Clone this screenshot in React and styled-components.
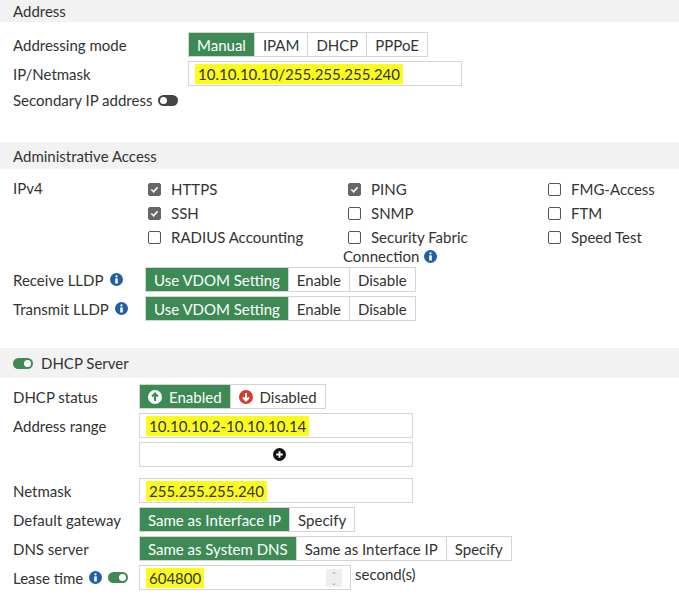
import React from "react";
import styled, { createGlobalStyle } from "styled-components";

const G = createGlobalStyle`
  body { margin:0; background:#fff; font-family: Lato, "Open Sans", sans-serif; font-size:15px; color:#333; }
`;
const GREEN = "#3d8a55";

const Header = styled.div`
  background:#f2f2f2; height:${p => p.h || 24}px; display:flex; align-items:center; gap:8px;
  padding-left:13px; margin-top:${p => p.mt || 0}px; color:#333; font-size:15px;
`;
const Row = styled.div`
  display:flex; align-items:${p => p.top ? "flex-start" : "center"}; padding-left:13px;
  margin-top:${p => p.mt || 4}px; min-height:24px;
`;
const Label = styled.div`
  width:${p => p.w}px; flex:none; display:flex; align-items:center; gap:6px; white-space:nowrap;
`;
const Group = styled.div` display:flex; border:1px solid #d5d5d5; height:23px; `;
const Seg = styled.div`
  padding:0 ${p => p.px || 8}px; display:flex; align-items:center; gap:7px;
  background:${p => p.on ? GREEN : "#fff"}; color:${p => p.on ? "#fff" : "#333"};
  & + & { border-left:1px solid #d5d5d5; }
`;
const Input = styled.div`
  width:${p => p.w}px; height:25px; border:1px solid #d5d5d5; box-sizing:border-box;
  display:flex; align-items:center; padding-left:6px; justify-content:${p => p.center ? "center" : "flex-start"};
  position:relative;
`;
const Hl = styled.span` background:#fbfb1e; padding:1px 3px; `;
const Toggle = styled.span`
  width:20px; height:11px; border-radius:6px; background:${p => p.on ? GREEN : "#444"};
  position:relative; display:inline-block; flex:none;
  &::after { content:""; position:absolute; top:2px; ${p => p.on ? "right:2px" : "left:2px"}; width:7px; height:7px; border-radius:50%; background:#fff; }
`;
const Info = () => (
  <svg width="13" height="13" viewBox="0 0 14 14"><circle cx="7" cy="7" r="7" fill="#1f5fa8"/><circle cx="7" cy="3.6" r="1.2" fill="#fff"/><rect x="5.6" y="5.8" width="2.8" height="5.5" fill="#fff"/></svg>
);
const Grid = styled.div` display:grid; grid-template-columns:200px 200px 130px; row-gap:4px; align-items:start; `;
const Check = styled.div` display:flex; align-items:center; gap:10px; height:20px; `;
const Box = styled.span`
  width:13px; height:13px; border-radius:2px; box-sizing:border-box;
  border:1px solid ${p => p.on ? "#666" : "#555"}; background:${p => p.on ? "#666" : "#fff"};
  display:inline-flex; align-items:center; justify-content:center; flex:none;
`;
const CB = ({ on, children }) => (
  <Check><Box on={on}>{on && <svg width="9" height="9" viewBox="0 0 10 10"><path d="M1.5 5l2.5 2.5 4.5-5" stroke="#fff" strokeWidth="1.8" fill="none"/></svg>}</Box>{children}</Check>
);
const Spin = styled.div`
  position:absolute; right:8px; top:3px; width:16px; height:18px; background:#eee;
  display:flex; flex-direction:column; align-items:center; justify-content:center; font-size:7px; color:#999; line-height:8px;
`;

export default function App() {
  return (
    <>
      <G />
      <Header h={22}>Address</Header>
      <Row mt={10}><Label w={175}>Addressing mode</Label>
        <Group><Seg on>Manual</Seg><Seg>IPAM</Seg><Seg>DHCP</Seg><Seg>PPPoE</Seg></Group></Row>
      <Row mt={4}><Label w={175}>IP/Netmask</Label><Input w={274}><Hl>10.10.10.10/255.255.255.240</Hl></Input></Row>
      <Row mt={2}><Label w={175}>Secondary IP address <Toggle /></Label></Row>
      <Header h={27} mt={30}>Administrative Access</Header>
      <Row top mt={10}><Label w={135}>IPv4</Label>
        <Grid>
          <CB on>HTTPS</CB><CB on>PING</CB><CB>FMG-Access</CB>
          <CB on>SSH</CB><CB>SNMP</CB><CB>FTM</CB>
          <CB>RADIUS Accounting</CB>
          <div><CB>Security Fabric</CB><div style={{ marginLeft: -5, display: "flex", gap: 5, alignItems: "center" }}>Connection <Info /></div></div>
          <CB>Speed Test</CB>
        </Grid>
      </Row>
      <Row mt={2}><Label w={132}>Receive LLDP <Info /></Label>
        <Group><Seg on>Use VDOM Setting</Seg><Seg>Enable</Seg><Seg>Disable</Seg></Group></Row>
      <Row mt={4}><Label w={132}>Transmit LLDP <Info /></Label>
        <Group><Seg on>Use VDOM Setting</Seg><Seg>Enable</Seg><Seg>Disable</Seg></Group></Row>
      <Header h={30} mt={27}><Toggle on />DHCP Server</Header>
      <Row mt={6}><Label w={126}>DHCP status</Label>
        <Group>
          <Seg on><svg width="14" height="14" viewBox="0 0 14 14"><circle cx="7" cy="7" r="7" fill="#fff"/><path d="M7 11V4M4 6.5L7 3.5 10 6.5" stroke={GREEN} strokeWidth="2" fill="none"/></svg>Enabled</Seg>
          <Seg><svg width="14" height="14" viewBox="0 0 14 14"><circle cx="7" cy="7" r="7" fill="#d63b2f"/><path d="M7 3v7M4 7.5L7 10.5 10 7.5" stroke="#fff" strokeWidth="2" fill="none"/></svg>Disabled</Seg>
        </Group></Row>
      <Row mt={4}><Label w={126}>Address range</Label><Input w={274}><Hl>10.10.10.2-10.10.10.14</Hl></Input></Row>
      <Row mt={4}><Label w={126} /><Input w={274} center>
        <svg width="13" height="13" viewBox="0 0 14 14"><circle cx="7" cy="7" r="7" fill="#111"/><path d="M7 3.5v7M3.5 7h7" stroke="#fff" strokeWidth="2"/></svg></Input></Row>
      <Row mt={11}><Label w={126}>Netmask</Label><Input w={274}><Hl>255.255.255.240</Hl></Input></Row>
      <Row mt={4}><Label w={126}>Default gateway</Label>
        <Group><Seg on>Same as Interface IP</Seg><Seg>Specify</Seg></Group></Row>
      <Row mt={4}><Label w={126}>DNS server</Label>
        <Group><Seg on>Same as System DNS</Seg><Seg>Same as Interface IP</Seg><Seg>Specify</Seg></Group></Row>
      <Row mt={4}><Label w={126}>Lease time <Info /><Toggle on /></Label>
        <Input w={212}><Hl>604800</Hl><Spin>⌃<br/>⌄</Spin></Input>
        <span style={{ marginLeft: 4, alignSelf: "flex-start" }}>second(s)</span></Row>
    </>
  );
}
